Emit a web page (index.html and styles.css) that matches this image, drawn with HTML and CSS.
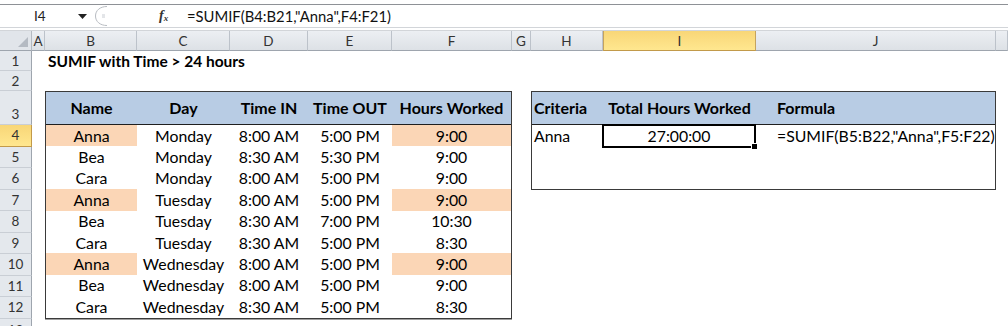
FILE: index.html
```html
<!DOCTYPE html>
<html lang="en">
<head>
    <meta charset="UTF-8">
    <link rel="stylesheet" href="styles.css">
    <title>SUMIF with Time</title>
</head>
<body>
    <div class="formula-bar">
        <div class="name-box">I4</div>
        <div class="name-arrow">
            <svg width="9" height="5" viewBox="0 0 9 5"><path d="M0 0h9L4.5 5z" fill="#222"/></svg>
        </div>
        <div class="fx-zone">
            <svg class="pill" width="16" height="20" viewBox="0 0 16 20"><path d="M14 0.5C7 0.5 2.5 4.5 2.5 10S7 19.5 14 19.5" fill="none" stroke="#b8bcc2"/><path d="M9 9h3M9 11h3" stroke="#c8ccd2"/></svg>
            <span class="fx">f<sub>x</sub></span>
        </div>
        <div class="formula">=SUMIF(B4:B21,"Anna",F4:F21)</div>
    </div>

    <div class="sheet">
        <div class="corner"><svg width="10" height="10" viewBox="0 0 10 10"><path d="M10 0V10H0z" fill="#b4bac2"/></svg></div>
        <div class="ch">A</div>
        <div class="ch">B</div>
        <div class="ch">C</div>
        <div class="ch">D</div>
        <div class="ch">E</div>
        <div class="ch">F</div>
        <div class="ch">G</div>
        <div class="ch">H</div>
        <div class="ch active">I</div>
        <div class="ch">J</div>
        <div class="ch"></div>

        <div class="rh">1</div>
        <div class="rh">2</div>
        <div class="rh tall">3</div>
        <div class="rh active">4</div>
        <div class="rh">5</div>
        <div class="rh">6</div>
        <div class="rh">7</div>
        <div class="rh">8</div>
        <div class="rh">9</div>
        <div class="rh">10</div>
        <div class="rh">11</div>
        <div class="rh">12</div>
        <div class="rh last">13</div>

        <div class="title">SUMIF with Time &gt; 24 hours</div>

        <div class="hours-table">
            <div class="th">Name</div>
            <div class="th">Day</div>
            <div class="th">Time IN</div>
            <div class="th">Time OUT</div>
            <div class="th">Hours Worked</div>

            <div class="td mark">Anna</div><div class="td">Monday</div><div class="td">8:00 AM</div><div class="td">5:00 PM</div><div class="td mark">9:00</div>
            <div class="td">Bea</div><div class="td">Monday</div><div class="td">8:30 AM</div><div class="td">5:30 PM</div><div class="td">9:00</div>
            <div class="td">Cara</div><div class="td">Monday</div><div class="td">8:00 AM</div><div class="td">5:00 PM</div><div class="td">9:00</div>
            <div class="td mark">Anna</div><div class="td">Tuesday</div><div class="td">8:00 AM</div><div class="td">5:00 PM</div><div class="td mark">9:00</div>
            <div class="td">Bea</div><div class="td">Tuesday</div><div class="td">8:30 AM</div><div class="td">7:00 PM</div><div class="td">10:30</div>
            <div class="td">Cara</div><div class="td">Tuesday</div><div class="td">8:30 AM</div><div class="td">5:00 PM</div><div class="td">8:30</div>
            <div class="td mark">Anna</div><div class="td">Wednesday</div><div class="td">8:00 AM</div><div class="td">5:00 PM</div><div class="td mark">9:00</div>
            <div class="td">Bea</div><div class="td">Wednesday</div><div class="td">8:00 AM</div><div class="td">5:00 PM</div><div class="td">9:00</div>
            <div class="td">Cara</div><div class="td">Wednesday</div><div class="td">8:30 AM</div><div class="td">5:00 PM</div><div class="td">8:30</div>
        </div>

        <div class="result-table">
            <div class="th left">Criteria</div>
            <div class="th">Total Hours Worked</div>
            <div class="th indent">Formula</div>

            <div class="td left">Anna</div>
            <div class="td selected">27:00:00</div>
            <div class="td indent">=SUMIF(B5:B22,"Anna",F5:F22)</div>

            <div class="td"></div><div class="td"></div><div class="td"></div>
            <div class="td"></div><div class="td"></div><div class="td"></div>
        </div>
    </div>
</body>
</html>
```

FILE: styles.css
```css
body{
    margin: 0;
    background: #fff;
    font-family: Lato, "Liberation Sans", sans-serif;
    font-size: 15.8px;
    color: #000;
}

/* formula bar */
.formula-bar{
    display: flex;
    align-items: center;
    height: 22px;
    margin-top: 4px;
    border-top: 1px solid #8e9196;
    border-bottom: 1px solid #d2d5d9;
}
.name-box{
    width: 78px;
    padding-left: 34px;
    box-sizing: border-box;
    font-size: 13.5px;
    color: #222;
}
.name-arrow{
    width: 14px;
    display: flex;
    align-items: center;
    padding-top: 1px;
}
.fx-zone{
    display: flex;
    align-items: center;
    width: 90px;
    height: 100%;
}
.pill{
    margin-left: 1px;
}
.fx{
    margin-left: 50px;
    font-family: "Liberation Serif", serif;
    font-style: italic;
    font-weight: bold;
    font-size: 14px;
    color: #333;
}
.fx sub{
    font-size: 9px;
    vertical-align: baseline;
    position: relative;
    top: 1px;
}
.formula{
    padding-left: 5px;
    font-size: 14.8px;
    color: #111;
}

/* sheet grid */
.sheet{
    display: grid;
    grid-template-columns: 32px 13px 92px 93px 78px 84px 120px 19px 72px 153px 240px 1fr;
    grid-template-rows: 20px 20px 20px 34px repeat(9, 21.5px) 1fr;
    width: 1008px;
    height: 297px;
    margin-top: 2px;
    border-top: 1px solid #d2d5d9;
    overflow: hidden;
}
.sheet > div{
    min-width: 0;
}
.corner{
    display: flex;
    align-items: flex-end;
    justify-content: flex-end;
    padding: 0 3px 3px 0;
    background: #e1e5ea;
    border-right: 1px solid #b4bac2;
    border-bottom: 1px solid #9ea5ae;
}
.ch{
    display: flex;
    align-items: center;
    justify-content: center;
    background: linear-gradient(#eceff3, #dde1e6);
    border-right: 1px solid #bcc2ca;
    border-bottom: 1px solid #9ea5ae;
    font-size: 13.5px;
    color: #333;
}
.ch.active{
    background: linear-gradient(#f8d677, #ffe78f);
    border-right: 1px solid #c5a35d;
    border-left: 1px solid #c5a35d;
    border-bottom: 1px solid #c29a4a;
}
.rh{
    grid-column: 1;
    display: flex;
    align-items: center;
    justify-content: center;
    background: #e4e8ed;
    border-right: 1px solid #9ea5ae;
    border-bottom: 1px solid #c9ced5;
    font-size: 13.5px;
    color: #333;
}
.rh.tall{
    align-items: flex-end;
    padding-bottom: 2px;
}
.rh.last{
    align-items: flex-start;
    padding-top: 3px;
}
.rh.active{
    background: linear-gradient(#f8d677, #ffe78f);
    border-bottom: 1px solid #c29a4a;
    border-right: 1px solid #c29a4a;
}

.title{
    grid-column: 3 / 8;
    grid-row: 2;
    display: flex;
    align-items: center;
    padding-left: 3px;
    font-size: 15.5px;
    font-weight: bold;
}

/* tables */
.hours-table{
    grid-column: 3 / 8;
    grid-row: 4 / 14;
    display: grid;
    grid-template-columns: 91px 93px 78px 84px 1fr;
    grid-template-rows: 33px repeat(9, 1fr);
    border: 1px solid #3a3a3a;
    box-shadow: 0 1px 0 #a0a0a0;
}
.result-table{
    grid-column: 9 / 12;
    grid-row: 4 / 8;
    display: grid;
    grid-template-columns: 71px 153px minmax(0, 1fr);
    grid-template-rows: 33px repeat(3, 1fr);
    border: 1px solid #3a3a3a;
}
.th{
    display: flex;
    align-items: flex-end;
    justify-content: center;
    padding-bottom: 7px;
    background: #b8cce4;
    border-bottom: 1px solid #1f1f1f;
    font-size: 16px;
    font-weight: bold;
    white-space: nowrap;
}
.td{
    display: flex;
    align-items: center;
    justify-content: center;
    padding-bottom: 1px;
    white-space: nowrap;
}
.th.left,
.td.left{
    justify-content: flex-start;
    padding-left: 2px;
}
.th.indent,
.td.indent{
    justify-content: flex-start;
    padding-left: 21px;
}
.mark{
    background: #fbd6b6;
}
.selected{
    position: relative;
    border: 2px solid #000;
    margin: -1px 0 -1px -1px;
}
.selected::after{
    content: "";
    position: absolute;
    right: -4px;
    bottom: -4px;
    width: 5px;
    height: 5px;
    background: #000;
    border: 1px solid #fff;
}
```
